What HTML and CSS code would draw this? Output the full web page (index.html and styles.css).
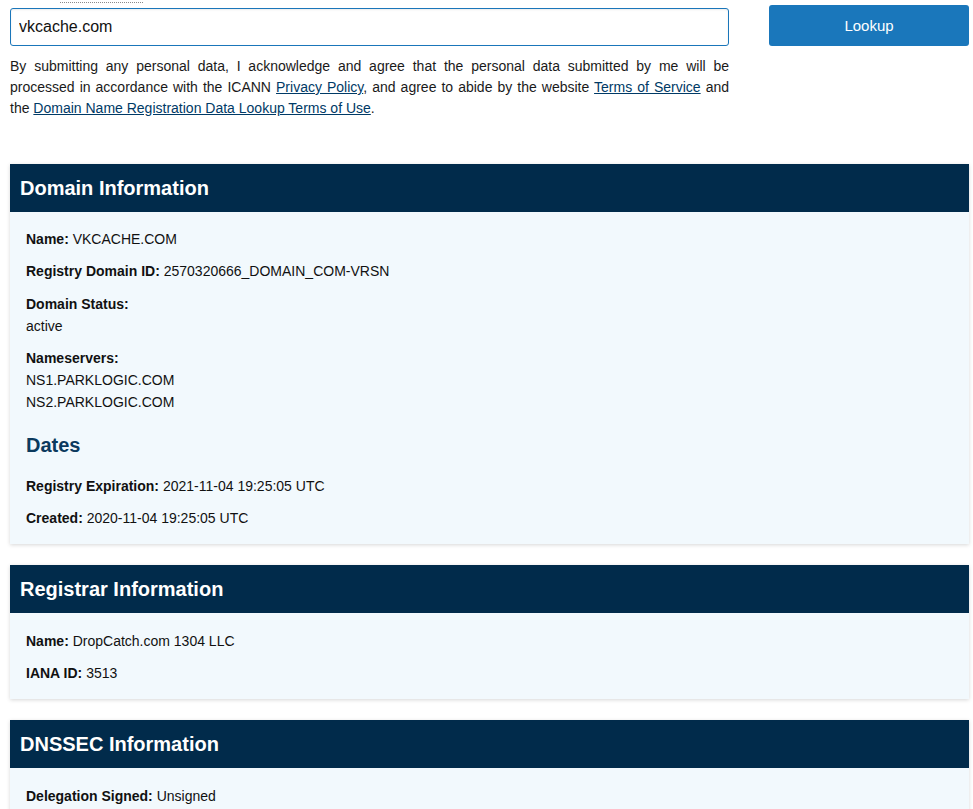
FILE: index.html
```html
<!DOCTYPE html>
<html lang="en">
<head>
<meta charset="utf-8">
<title>Registration Data Lookup</title>
<link rel="stylesheet" href="styles.css">
</head>
<body>
<div class="page">
  <div class="top-strip"><span class="dotted"></span></div>
  <div class="lookup-row">
    <div class="left-col">
      <div class="input-row">
        <input class="search" type="text" value="vkcache.com">
      </div>
    </div>
    <button class="lookup-btn">Lookup</button>
  </div>
  <div class="left-col">
    <p class="disclaimer">By submitting any personal data, I acknowledge and agree that the personal data submitted by me will be processed in accordance with the ICANN <a href="#">Privacy Policy</a>, and agree to abide by the website <a href="#">Terms of Service</a> and the <a href="#">Domain Name Registration Data Lookup Terms of Use</a>.</p>
  </div>

  <section class="card first">
    <h2 class="card-head">Domain Information</h2>
    <div class="card-body">
      <p><b>Name:</b> VKCACHE.COM</p>
      <p class="gap-more"><b>Registry Domain ID:</b> 2570320666_DOMAIN_COM-VRSN</p>
      <p><b>Domain Status:</b><br>active</p>
      <p><b>Nameservers:</b><br>NS1.PARKLOGIC.COM<br>NS2.PARKLOGIC.COM</p>
      <h3 class="sub">Dates</h3>
      <p><b>Registry Expiration:</b> 2021-11-04 19:25:05 UTC</p>
      <p><b>Created:</b> 2020-11-04 19:25:05 UTC</p>
    </div>
  </section>

  <section class="card">
    <h2 class="card-head">Registrar Information</h2>
    <div class="card-body">
      <p><b>Name:</b> DropCatch.com 1304 LLC</p>
      <p><b>IANA ID:</b> 3513</p>
    </div>
  </section>

  <section class="card">
    <h2 class="card-head">DNSSEC Information</h2>
    <div class="card-body">
      <p><b>Delegation Signed:</b> Unsigned</p>
      <p>&nbsp;</p>
    </div>
  </section>
</div>
</body>
</html>
```

FILE: styles.css
```css
html, body {
  margin: 0;
  padding: 0;
  background: #ffffff;
}
body {
  font-family: "Liberation Sans", Arial, Helvetica, sans-serif;
  color: #111111;
  font-size: 14px;
}
.page {
  padding: 0 4px 0 10px;
}
.top-strip {
  height: 5px;
}
.dotted {
  display: block;
  margin-left: 50px;
  width: 83px;
  height: 2px;
  border-bottom: 1px dotted #8a8a8a;
}
.lookup-row {
  display: flex;
  align-items: flex-end;
  gap: 40px;
}
.left-col {
  width: 719px;
}
.input-row {
  display: flex;
}
.search {
  box-sizing: border-box;
  width: 100%;
  height: 38px;
  margin: 0;
  border: 1px solid #1a76ba;
  border-radius: 3px;
  padding: 0 8px;
  font-family: "Liberation Sans", Arial, sans-serif;
  font-size: 16px;
  color: #111111;
  background: #ffffff;
  box-shadow: inset 0 1px 2px rgba(0,0,0,0.08);
  outline: none;
}
.lookup-btn {
  width: 200px;
  height: 41px;
  margin: 0;
  border: none;
  border-radius: 3px;
  background: #1a77bb;
  color: #ffffff;
  font-family: "Liberation Sans", Arial, sans-serif;
  font-size: 15px;
  cursor: pointer;
}
.disclaimer {
  margin: 10px 0 0;
  line-height: 21px;
  text-align: justify;
  font-size: 14px;
  color: #1a1a1a;
}
.disclaimer a {
  color: #003a66;
  text-decoration: underline;
}
.card {
  margin-bottom: 21px;
  box-shadow: 0 1px 4px rgba(0,0,0,0.16);
  background: #f2f9fd;
}
.card.first {
  margin-top: 45px;
}
.card-head {
  margin: 0;
  height: 48px;
  line-height: 48px;
  padding: 0 10px;
  background: #012b4b;
  color: #ffffff;
  font-size: 20px;
  font-weight: bold;
}
.card-body {
  padding: 17px 16px 5px;
}
.card.first .card-body {
  padding-top: 16px;
}
.card-body p {
  margin: 0 0 10px;
  line-height: 22px;
  font-size: 14px;
  color: #111111;
}
.card-body p.gap-more {
  margin-bottom: 11px;
}
.card-body b {
  font-weight: bold;
}
.sub {
  margin: 20px 0 18px;
  line-height: 24px;
  font-size: 20px;
  font-weight: bold;
  color: #0b3a5e;
}
```
